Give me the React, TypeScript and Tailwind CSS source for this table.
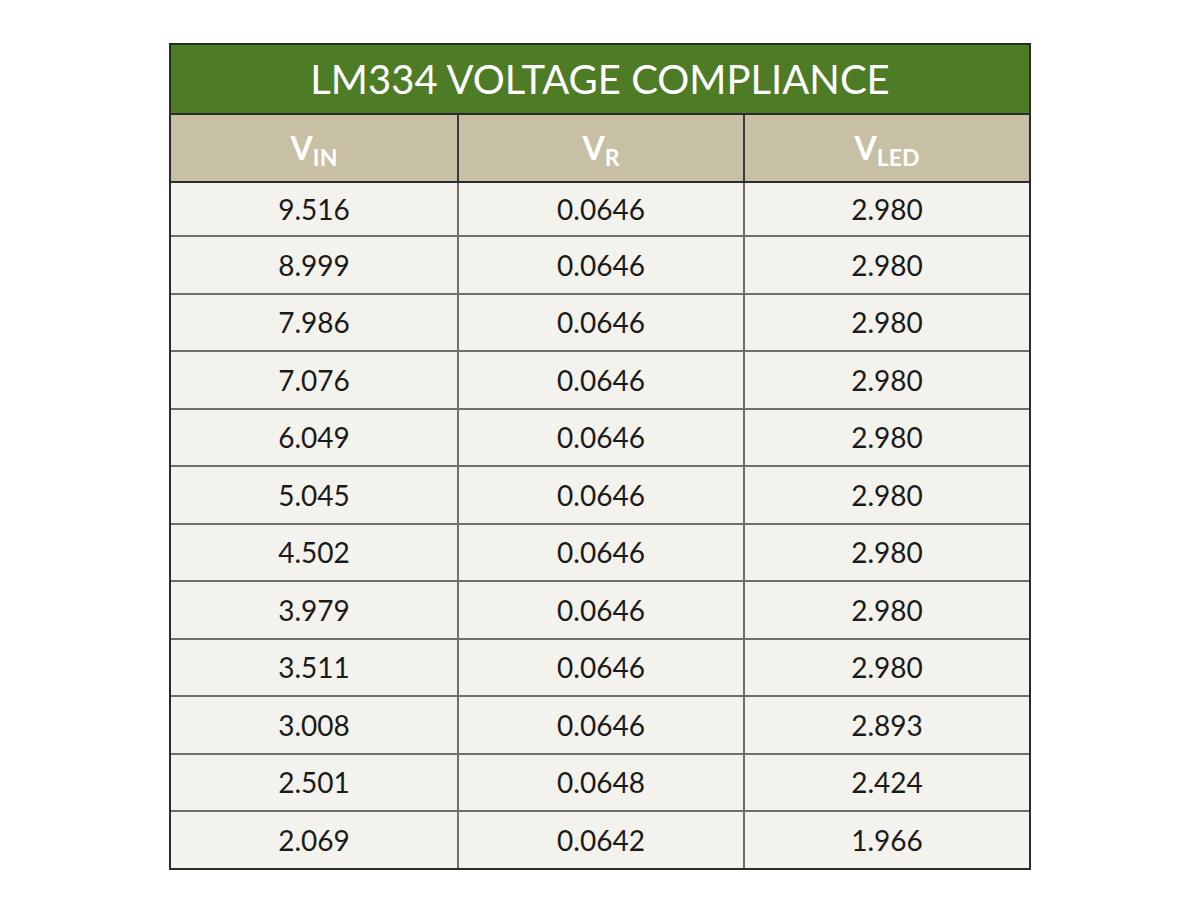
const rows: [string, string, string][] = [
  ["9.516", "0.0646", "2.980"],
  ["8.999", "0.0646", "2.980"],
  ["7.986", "0.0646", "2.980"],
  ["7.076", "0.0646", "2.980"],
  ["6.049", "0.0646", "2.980"],
  ["5.045", "0.0646", "2.980"],
  ["4.502", "0.0646", "2.980"],
  ["3.979", "0.0646", "2.980"],
  ["3.511", "0.0646", "2.980"],
  ["3.008", "0.0646", "2.893"],
  ["2.501", "0.0648", "2.424"],
  ["2.069", "0.0642", "1.966"],
];

const headers: [string, string][] = [
  ["V", "IN"],
  ["V", "R"],
  ["V", "LED"],
];

const App = () => {
  return (
    <div className="w-[1200px] h-[912px] bg-white pt-[43px] pl-[169px] font-['Lato',sans-serif]">
      <div className="w-[862px] border-2 border-[#2b2b2b] bg-[#f3f2ed]">
        <div className="h-[70px] bg-[#4e7b26] border-b-2 border-[#2b2b2b] flex items-center justify-center">
          <span className="text-white text-[40px] leading-none">LM334 VOLTAGE COMPLIANCE</span>
        </div>
        <div className="h-[68px] grid grid-cols-3 bg-[#c8c0a4] border-b-2 border-[#2b2b2b]">
          {headers.map(([v, sub], i) => (
            <div
              key={sub}
              className={`flex items-center justify-center text-white font-bold ${i > 0 ? "border-l-2 border-[#3a3a3a]" : ""}`}
            >
              <span className="text-[32px] leading-none">{v}</span>
              <span className="text-[23px] leading-none mt-[18px]">{sub}</span>
            </div>
          ))}
        </div>
        {rows.map((r, ri) => (
          <div
            key={ri}
            className={`grid grid-cols-3 ${ri === 0 ? "h-[52px]" : "h-[57.5px] border-t-2 border-[#6e6e6e]"}`}
          >
            {r.map((c, ci) => (
              <div
                key={ci}
                className={`flex items-center justify-center text-[28px] text-[#1a1a1a] ${ci > 0 ? "border-l-2 border-[#6e6e6e]" : ""}`}
              >
                {c}
              </div>
            ))}
          </div>
        ))}
      </div>
    </div>
  );
};

export default App;
